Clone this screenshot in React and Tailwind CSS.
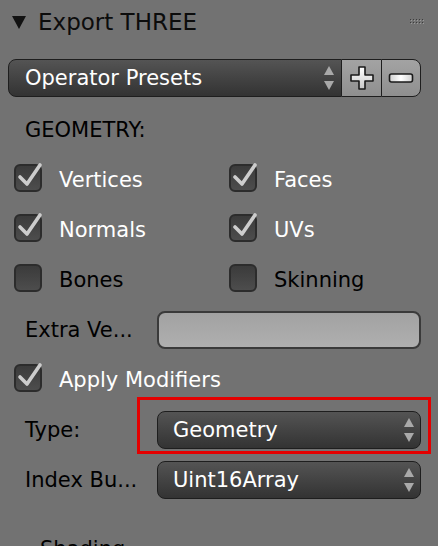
import React from "react";

const Arrows = () => (
  <svg width="10" height="25" viewBox="0 0 10 25" className="shrink-0">
    <polygon points="5,0 10,9 0,9" fill="#a9a9a9" />
    <polygon points="0,15 10,15 5,24" fill="#a9a9a9" />
  </svg>
);

const CheckBox = ({ checked }) => (
  <div className="relative w-[28px] h-[28px] shrink-0 mb-1 rounded-[6px] border-2 border-[#2c2c2c] bg-gradient-to-b from-[#3b3b3b] to-[#4d4d4d]">
    {checked && (
      <svg
        className="absolute -left-[2px] -top-[2px] overflow-visible"
        width="28"
        height="28"
        viewBox="0 0 28 28"
      >
        <path
          d="M6 13 L13 20 L26 1"
          stroke="#cdcdcd"
          strokeWidth="3.6"
          fill="none"
          strokeLinecap="round"
          strokeLinejoin="round"
        />
      </svg>
    )}
  </div>
);

const Check = ({ label, checked }) => (
  <div className="flex items-center h-[50px]">
    <CheckBox checked={checked} />
    <span className={`ml-[17px] ${checked ? "text-white" : "text-black"}`}>
      {label}
    </span>
  </div>
);

const Select = ({ value }) => (
  <div className="flex-1 flex items-center h-[38px] rounded-[8px] border border-[#1e1e1e] bg-gradient-to-b from-[#545454] to-[#333333] pl-[15px] pr-[6px] text-white">
    <span className="flex-1">{value}</span>
    <Arrows />
  </div>
);

const Field = ({ label, children }) => (
  <div className="flex items-center h-[50px]">
    <span className="w-[149px] pl-[17px] shrink-0 text-black">{label}</span>
    {children}
  </div>
);

export default function App() {
  return (
    <div
      className="relative w-[438px] h-[546px] overflow-hidden bg-[#727272] pl-2 pr-[17px] text-[21px] leading-none"
      style={{ fontFamily: '"DejaVu Sans", Verdana, sans-serif' }}
    >
      {/* header */}
      <div className="flex items-center h-[44px] pl-[4px] -mr-[4px]">
        <svg width="14" height="13" viewBox="0 0 14 13">
          <polygon points="0,0 14,0 7,13" fill="#121212" />
        </svg>
        <span className="ml-[12px] text-[23px] text-[#0c0c0c] flex-1">Export THREE</span>
        <svg width="15" height="7" viewBox="0 0 15 7">
          {[0, 3, 6, 9, 12].map((x) =>
            [0, 3].map((y) => (
              <g key={`${x}-${y}`}>
                <rect x={x + 1} y={y + 1} width="1" height="1" fill="#9a9a9a" />
                <rect x={x} y={y} width="1" height="1" fill="#3c3c3c" />
              </g>
            ))
          )}
        </svg>
      </div>

      {/* presets */}
      <div className="flex h-[38px] mt-[15px] mb-[8px]">
        <div className="flex-1 flex items-center rounded-l-[8px] border border-[#1e1e1e] bg-gradient-to-b from-[#545454] to-[#333333] pl-[16px] pr-[7px] text-white">
          <span className="flex-1">Operator Presets</span>
          <Arrows />
        </div>
        <div className="w-[39px] flex items-center justify-center border-y border-[#1e1e1e] bg-gradient-to-b from-[#a3a3a3] to-[#8f8f8f]">
          <svg width="26" height="26" viewBox="0 0 26 26">
            <defs>
              <linearGradient id="pg" x1="0" y1="0" x2="0" y2="1">
                <stop offset="0" stopColor="#ffffff" />
                <stop offset="1" stopColor="#c8c8c8" />
              </linearGradient>
            </defs>
            <path
              d="M10 2 H16 V10 H24 V16 H16 V24 H10 V16 H2 V10 H10 Z"
              fill="url(#pg)"
              stroke="#1a1a1a"
              strokeWidth="1.6"
              strokeLinejoin="round"
            />
          </svg>
        </div>
        <div className="w-[40px] flex items-center justify-center rounded-r-[8px] border border-[#1e1e1e] bg-gradient-to-b from-[#a3a3a3] to-[#8f8f8f]">
          <svg width="26" height="12" viewBox="0 0 26 12">
            <defs>
              <linearGradient id="mg" x1="0" y1="0" x2="1" y2="0">
                <stop offset="0" stopColor="#cfcfcf" />
                <stop offset="0.5" stopColor="#ffffff" />
                <stop offset="1" stopColor="#cfcfcf" />
              </linearGradient>
            </defs>
            <rect x="1.5" y="2" width="23" height="8" rx="2" fill="url(#mg)" stroke="#1a1a1a" strokeWidth="1.6" />
          </svg>
        </div>
      </div>

      {/* geometry */}
      <div className="flex items-center h-[50px] pl-[17px] text-black">GEOMETRY:</div>

      <div className="grid grid-cols-[215px_1fr] pl-[6px]">
        <Check label="Vertices" checked />
        <Check label="Faces" checked />
        <Check label="Normals" checked />
        <Check label="UVs" checked />
        <Check label="Bones" />
        <Check label="Skinning" />
      </div>

      <Field label="Extra Ve...">
        <div className="flex-1 h-[38px] rounded-[8px] border-2 border-[#3a3a3a] bg-gradient-to-b from-[#a2a2a2] to-[#afafaf]" />
      </Field>

      <div className="pl-[6px]">
        <Check label="Apply Modifiers" checked />
      </div>

      <Field label="Type:">
        <Select value="Geometry" />
      </Field>

      <Field label="Index Bu...">
        <Select value="Uint16Array" />
      </Field>

      <div className="flex items-center h-[50px] mt-[19px] pl-[32px] text-black">Shading</div>

      {/* highlight annotation */}
      <div className="absolute left-[137px] top-[397px] w-[294px] h-[57px] border-[3px] border-[#e40000]" />
    </div>
  );
}
